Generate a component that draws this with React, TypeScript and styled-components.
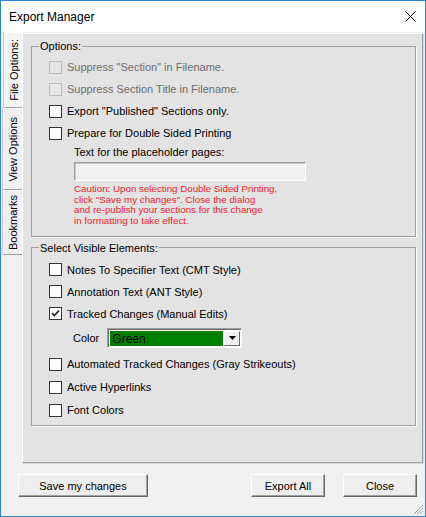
import React from 'react';
import styled, { createGlobalStyle } from 'styled-components';

const GlobalStyle = createGlobalStyle`
  html, body {
    margin: 0;
    padding: 0;
    background: #ffffff;
  }
  body {
    font-family: "Liberation Sans", Arial, sans-serif;
    font-size: 11px;
    color: #000;
  }
`;

const optionRows = [
  { id: 'suppressSection', label: 'Suppress "Section" in Filename.', disabled: true },
  { id: 'suppressTitle', label: 'Suppress Section Title in Filename.', disabled: true },
  { id: 'published', label: 'Export "Published" Sections only.' },
  { id: 'doubleSided', label: 'Prepare for Double Sided Printing' },
];

const caution = [
  'Caution: Upon selecting Double Sided Printing,',
  'click "Save my changes". Close the dialog',
  'and re-publish your sections for this change',
  'in formatting to take effect.',
];

const tabs = [
  { label: 'File Options:', len: 76, active: true },
  { label: 'View Options', len: 82 },
  { label: 'Bookmarks', len: 65 },
];

export default function App() {
  return (
    <>
      <GlobalStyle />
      <Window>
        <TitleBar>
          <Title>Export Manager</Title>
          <svg width="11" height="11" viewBox="0 0 11 11">
            <path d="M0.5 0.5 L10.5 10.5 M10.5 0.5 L0.5 10.5" stroke="#000" strokeWidth="1" fill="none" />
          </svg>
        </TitleBar>

        <Body>
          <Main>
            <TabStrip>
              {tabs.map((t) => (
                <Tab key={t.label} $len={t.len} $active={t.active}>
                  <TabText>{t.label}</TabText>
                </Tab>
              ))}
            </TabStrip>

            <Panel>
              <Group>
                <Legend>Options:</Legend>
                <GroupBody $pt={3} $pb={9}>
                  {optionRows.map((r) => (
                    <CheckRow key={r.id}>
                      <Box $disabled={r.disabled} />
                      <RowLabel $disabled={r.disabled}>{r.label}</RowLabel>
                    </CheckRow>
                  ))}
                  <Indent>
                    <FieldLabel>Text for the placeholder pages:</FieldLabel>
                    <TextBox />
                    <Caution>
                      {caution.map((line) => (
                        <div key={line}>{line}</div>
                      ))}
                    </Caution>
                  </Indent>
                </GroupBody>
              </Group>

              <Group $mt={4}>
                <Legend>Select Visible Elements:</Legend>
                <GroupBody $pt={4} $pb={3}>
                  <CheckRow>
                    <Box />
                    <RowLabel>Notes To Specifier Text (CMT Style)</RowLabel>
                  </CheckRow>
                  <CheckRow>
                    <Box />
                    <RowLabel>Annotation Text (ANT Style)</RowLabel>
                  </CheckRow>
                  <CheckRow>
                    <Box>
                      <svg width="11" height="11" viewBox="0 0 11 11">
                        <path d="M2 5.2 L4.3 7.6 L9 2.6" stroke="#222" strokeWidth="1.7" fill="none" />
                      </svg>
                    </Box>
                    <RowLabel>Tracked Changes (Manual Edits)</RowLabel>
                  </CheckRow>
                  <ColorRow>
                    <RowLabel>Color</RowLabel>
                    <Combo>
                      <ComboValue>Green</ComboValue>
                      <ComboButton>
                        <svg width="7" height="4" viewBox="0 0 7 4">
                          <path d="M0 0 H7 L3.5 4 Z" fill="#000" />
                        </svg>
                      </ComboButton>
                    </Combo>
                  </ColorRow>
                  <CheckRow $h={23} $mt={2}>
                    <Box />
                    <RowLabel>Automated Tracked Changes (Gray Strikeouts)</RowLabel>
                  </CheckRow>
                  <CheckRow $h={23}>
                    <Box />
                    <RowLabel>Active Hyperlinks</RowLabel>
                  </CheckRow>
                  <CheckRow $h={23}>
                    <Box />
                    <RowLabel>Font Colors</RowLabel>
                  </CheckRow>
                </GroupBody>
              </Group>
            </Panel>
          </Main>

          <ButtonBar>
            <Button $w={130}>Save my changes</Button>
            <Spacer />
            <Button $w={74}>Export All</Button>
            <Button $w={74}>Close</Button>
          </ButtonBar>

          <Grip>
            <svg width="12" height="12" viewBox="0 0 12 12">
              <path d="M11 2 L2 11 M11 5 L5 11 M11 8 L8 11" stroke="#a0a0a0" strokeWidth="1" fill="none" />
            </svg>
          </Grip>
        </Body>
      </Window>
    </>
  );
}

const Window = styled.div`
  position: relative;
  width: 426px;
  height: 517px;
  box-sizing: border-box;
  border: 1px solid #2b84d4;
  display: flex;
  flex-direction: column;
  background: #f0f0f0;
`;

const TitleBar = styled.div`
  height: 31px;
  flex-shrink: 0;
  background: #ffffff;
  display: flex;
  align-items: center;
  justify-content: space-between;
  padding: 0 9px 0 8px;
`;

const Title = styled.span`
  font-size: 12px;
  color: #000;
`;

const Body = styled.div`
  position: relative;
  flex: 1;
  display: flex;
  flex-direction: column;
  padding: 0 2px;
  background: #f0f0f0;
`;

const Main = styled.div`
  display: flex;
`;

const TabStrip = styled.div`
  width: 19px;
  display: flex;
  flex-direction: column;
`;

const Tab = styled.div<{ $len: number; $active?: boolean }>`
  height: ${(p) => p.$len}px;
  box-sizing: border-box;
  display: flex;
  align-items: center;
  justify-content: center;
  background: ${(p) => (p.$active ? '#f4f4f4' : '#f0f0f0')};
  border-top: 1px solid #ffffff;
  border-left: 1px solid #ffffff;
  border-bottom: 1px solid #a0a0a0;
  box-shadow: -1px 0 0 #c8c8c8;
  margin-left: ${(p) => (p.$active ? 1 : 0)}px;
`;

const TabText = styled.span`
  writing-mode: vertical-rl;
  transform: rotate(180deg);
  font-size: 11px;
  white-space: nowrap;
`;

const Panel = styled.div`
  width: 401px;
  height: 430px;
  margin-top: 1px;
  box-sizing: border-box;
  background: #e3e3e3;
  border-top: 1px solid #ffffff;
  border-left: 1px solid #ffffff;
  border-right: 1px solid #a0a0a0;
  border-bottom: 1px solid #a0a0a0;
  box-shadow: 1px 1px 0 #d8d8d8;
  padding: 5px 6px 0 8px;
`;

const Group = styled.fieldset<{ $mt?: number }>`
  margin: ${(p) => p.$mt ?? 0}px 0 0 0;
  padding: 0;
  min-width: 0;
  border: 1px solid #a0a0a0;
  box-shadow: 1px 1px 0 #ffffff;
`;

const Legend = styled.legend`
  margin-left: 7px;
  padding: 0 1px;
  font-size: 11px;
  line-height: 14px;
`;

const GroupBody = styled.div<{ $pt: number; $pb: number }>`
  display: flex;
  flex-direction: column;
  padding: ${(p) => p.$pt}px 0 ${(p) => p.$pb}px 17px;
`;

const CheckRow = styled.div<{ $h?: number; $mt?: number }>`
  height: ${(p) => p.$h ?? 22}px;
  margin-top: ${(p) => p.$mt ?? 0}px;
  display: flex;
  align-items: center;
  gap: 5px;
`;

const Box = styled.span<{ $disabled?: boolean }>`
  width: 13px;
  height: 13px;
  box-sizing: border-box;
  flex-shrink: 0;
  display: flex;
  align-items: center;
  justify-content: center;
  border: 1px solid ${(p) => (p.$disabled ? '#bcbcbc' : '#333333')};
  background: ${(p) => (p.$disabled ? '#e6e6e6' : '#ffffff')};
`;

const RowLabel = styled.span<{ $disabled?: boolean }>`
  font-size: 11px;
  line-height: 14px;
  white-space: nowrap;
  color: ${(p) => (p.$disabled ? '#6d6d6d' : '#000000')};
`;

const Indent = styled.div`
  display: flex;
  flex-direction: column;
  align-items: flex-start;
  padding-left: 25px;
`;

const FieldLabel = styled.span`
  margin-top: 1px;
  font-size: 11px;
  line-height: 14px;
`;

const TextBox = styled.div`
  width: 232px;
  height: 19px;
  margin-top: 3px;
  box-sizing: border-box;
  background: #f0f0f0;
  border: 1px solid;
  border-color: #a0a0a0 #ffffff #ffffff #a0a0a0;
  box-shadow: inset 1px 1px 0 #c8c8c8;
`;

const Caution = styled.div`
  margin-top: 3px;
  font-size: 9.75px;
  line-height: 10.7px;
  color: #ec1c2c;
  white-space: nowrap;
`;

const ColorRow = styled.div`
  height: 26px;
  display: flex;
  align-items: center;
  gap: 8px;
  padding-left: 24px;
`;

const Combo = styled.div`
  width: 135px;
  height: 20px;
  box-sizing: border-box;
  display: flex;
  padding: 1px;
  background: #ffffff;
  border: 1px solid;
  border-color: #a0a0a0 #ffffff #ffffff #a0a0a0;
  box-shadow: inset 1px 1px 0 #696969;
`;

const ComboValue = styled.div`
  flex: 1;
  margin: 1px 1px 0 1px;
  background: #008000;
  font-size: 12px;
  line-height: 16px;
  padding-left: 2px;
  color: #000;
`;

const ComboButton = styled.div`
  width: 16px;
  box-sizing: border-box;
  display: flex;
  align-items: center;
  justify-content: center;
  background: #f0f0f0;
  border: 1px solid;
  border-color: #ffffff #696969 #696969 #ffffff;
  margin-top: 1px;
`;

const ButtonBar = styled.div`
  display: flex;
  gap: 18px;
  padding: 11px 6px 0 15px;
`;

const Spacer = styled.div`
  flex: 1;
`;

const Button = styled.button<{ $w: number }>`
  width: ${(p) => p.$w}px;
  height: 23px;
  box-sizing: border-box;
  margin: 0;
  padding: 0;
  font-family: "Liberation Sans", Arial, sans-serif;
  font-size: 11px;
  color: #000;
  background: #eeeeee;
  border: 1px solid;
  border-color: #ffffff #696969 #696969 #ffffff;
  box-shadow: inset -1px -1px 0 #a0a0a0;
`;

const Grip = styled.div`
  position: absolute;
  right: 1px;
  bottom: 1px;
  width: 12px;
  height: 12px;
`;
